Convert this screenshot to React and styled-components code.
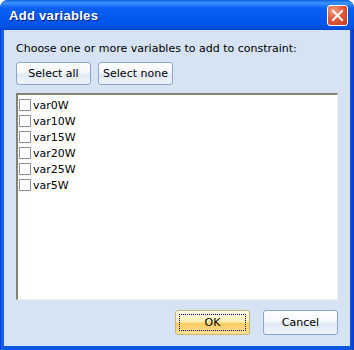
import React from 'react'
import styled, {createGlobalStyle} from 'styled-components'

const GlobalStyle = createGlobalStyle`
    html, body {
        margin: 0;
        padding: 0;
        background: #ffffff;
    }
`

const Window = styled.div`
    width: 354px;
    height: 350px;
    box-sizing: border-box;
    display: flex;
    flex-direction: column;
    background: linear-gradient(90deg, #0831d9 0px, #166aee 2px, #0d58e0 4px, #0d58e0 350px, #0838c8 354px);
    border-radius: 8px 8px 0 0;
    overflow: hidden;
    font-family: Tahoma, "DejaVu Sans", sans-serif;
    font-size: 11px;
`

const TitleBar = styled.div`
    height: 30px;
    flex: 0 0 30px;
    display: flex;
    align-items: center;
    justify-content: space-between;
    padding: 0 6px 0 9px;
    box-sizing: border-box;
    background: linear-gradient(180deg, #0a5fd8 0px, #3d95ff 3px, #0a60f3 8px, #0058ee 18px, #0054e6 26px, #0048d0 30px);
`

const Title = styled.span`
    color: #ffffff;
    font-family: "Liberation Sans", Arial, sans-serif;
    font-weight: bold;
    font-size: 13px;
    letter-spacing: 0.3px;
    text-shadow: 1px 1px 0 #0a1e80;
`

const CloseButton = styled.div`
    width: 21px;
    height: 21px;
    box-sizing: border-box;
    border: 1px solid #ffffff;
    border-radius: 3px;
    background: radial-gradient(circle at 30% 25%, #f0a080 0%, #e2593a 45%, #c63a1c 100%);
    display: flex;
    align-items: center;
    justify-content: center;
`

const Body = styled.div`
    flex: 1;
    margin: 0 4px 4px 4px;
    background: #d5e3f4;
    display: flex;
    flex-direction: column;
    padding: 12px 12px 11px 12px;
`

const Prompt = styled.div`
    color: #000000;
    line-height: 13px;
    margin-bottom: 7px;
`

const Row = styled.div`
    display: flex;
    gap: ${(p) => p.gap || 7}px;
    justify-content: ${(p) => p.justify || 'flex-start'};
`

const Button = styled.div`
    width: 75px;
    height: ${(p) => p.tall ? 25 : 23}px;
    box-sizing: border-box;
    border: 1px solid ${(p) => p.primary ? '#c8b47a' : '#8aa6cf'};
    border-radius: 3px;
    background: ${(p) => p.primary
        ? 'linear-gradient(180deg, #fffbe8 0%, #fff0b8 45%, #f9cd60 55%, #fbe090 100%)'
        : 'linear-gradient(180deg, #ffffff 0%, #f4f7fc 45%, #e2eaf6 55%, #eef3fb 100%)'};
    display: flex;
    align-items: center;
    justify-content: center;
    color: #000000;
    position: relative;
`

const FocusRing = styled.span`
    position: absolute;
    inset: 3px;
    border: 1px dotted #000080;
`

const ListBox = styled.div`
    flex: 1;
    margin-top: 8px;
    background: #ffffff;
    border-top: 2px solid #868070;
    border-left: 2px solid #868070;
    border-right: 1px solid #f2f1ea;
    border-bottom: 1px solid #f2f1ea;
    padding: 2px 0 0 0;
    margin-bottom: 10px;
`

const Item = styled.div`
    height: 16px;
    display: flex;
    align-items: center;
    gap: 2px;
    color: #000000;
`

const Box = styled.span`
    width: 12px;
    height: 12px;
    box-sizing: border-box;
    border: 1px solid #8f8f8f;
    background: #ffffff;
    margin-left: 1px;
`

const variables = ['var0W', 'var10W', 'var15W', 'var20W', 'var25W', 'var5W']

export default function App() {
    return (
        <>
            <GlobalStyle />
            <Window>
                <TitleBar>
                    <Title>Add variables</Title>
                    <CloseButton>
                        <svg width="13" height="13" viewBox="0 0 13 13">
                            <path d="M2 2 L11 11 M11 2 L2 11" stroke="#ffffff" strokeWidth="2" strokeLinecap="square" />
                        </svg>
                    </CloseButton>
                </TitleBar>
                <Body>
                    <Prompt>Choose one or more variables to add to constraint:</Prompt>
                    <Row>
                        <Button>Select all</Button>
                        <Button>Select none</Button>
                    </Row>
                    <ListBox>
                        {variables.map((name) => (
                            <Item key={name}>
                                <Box />
                                {name}
                            </Item>
                        ))}
                    </ListBox>
                    <Row justify="flex-end" gap={13}>
                        <Button tall primary>
                            <FocusRing />
                            OK
                        </Button>
                        <Button tall>Cancel</Button>
                    </Row>
                </Body>
            </Window>
        </>
    )
}
